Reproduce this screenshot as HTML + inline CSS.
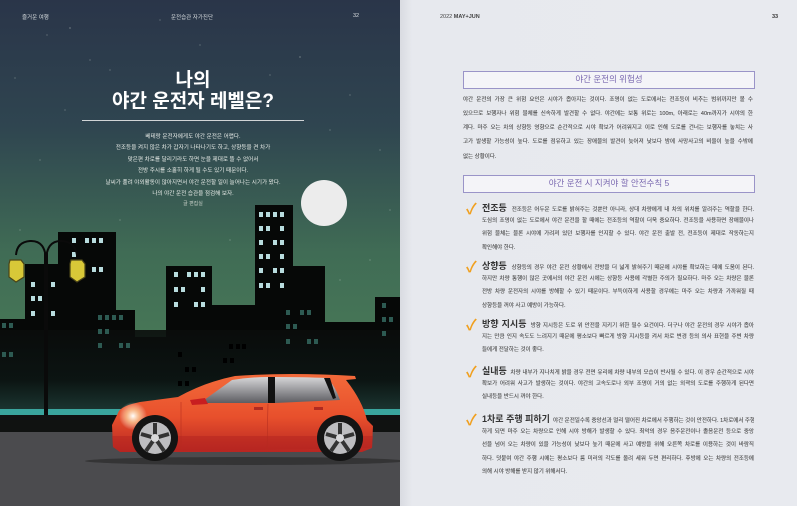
<!DOCTYPE html>
<html><head><meta charset="utf-8">
<style>
*{margin:0;padding:0;box-sizing:border-box}
body{width:797px;height:506px;overflow:hidden;font-family:"Liberation Sans","Noto Sans CJK KR",sans-serif;background:#e6e8ee;position:relative}
#L{position:absolute;left:0;top:0;width:400px;height:506px;overflow:hidden}
#R{position:absolute;left:400px;top:0;width:397px;height:506px;background:linear-gradient(90deg,#d9dbe1 0,#e7e9ee 12px,#e8eaef 100%)}
.t{position:absolute;white-space:nowrap;font-family:"Liberation Sans","Noto Sans CJK KR",sans-serif}
.ln{position:absolute;white-space:nowrap;font-size:5.5px;color:#484848;text-align:justify;text-align-last:justify;height:8px;line-height:8px;overflow:hidden;-webkit-text-stroke:0.1px #484848}
.box{position:absolute;left:63px;width:292px;height:18px;border:1.5px solid #9a94c8;background:#f4f4f8;color:#7a68b0;font-size:8.5px;text-align:center;line-height:15px}
.chk{position:absolute;left:66px;color:#f0a020;font-size:15px;font-weight:bold}
.h{font-weight:bold;color:#333;font-size:9px;-webkit-text-stroke:0}
</style></head><body>
<div id="L">
<svg width="400" height="506" viewBox="0 0 400 506" xmlns="http://www.w3.org/2000/svg">
<defs>
<linearGradient id="sky" x1="0" y1="0" x2="0" y2="1">
<stop offset="0" stop-color="#2a3549"/><stop offset="0.25" stop-color="#2f4550"/><stop offset="0.5" stop-color="#406c55"/><stop offset="0.8" stop-color="#4c7f58"/></linearGradient>
<linearGradient id="dark" x1="0" y1="0" x2="0" y2="1">
<stop offset="0" stop-color="#0a0c0b"/><stop offset="0.6" stop-color="#0c1513"/><stop offset="1" stop-color="#1e3c37"/></linearGradient>
<linearGradient id="body" x1="0" y1="0" x2="0" y2="1">
<stop offset="0" stop-color="#f26a3a"/><stop offset="0.55" stop-color="#e8502c"/><stop offset="1" stop-color="#b82622"/></linearGradient>
<linearGradient id="win" x1="0" y1="0" x2="0" y2="1">
<stop offset="0" stop-color="#d6d6d8"/><stop offset="1" stop-color="#5d5d62"/></linearGradient>
<radialGradient id="glow"><stop offset="0" stop-color="#fff"/><stop offset="0.5" stop-color="#ffe9b0" stop-opacity=".6"/><stop offset="1" stop-color="#fff" stop-opacity="0"/></radialGradient>
</defs>
<rect width="400" height="506" fill="url(#sky)"/>
<g fill="#cfd8d0" opacity=".7">
<circle cx="70" cy="28" r=".6"/><circle cx="47" cy="35" r=".5"/><circle cx="300" cy="57" r=".6"/><circle cx="15" cy="78" r=".5"/><circle cx="110" cy="70" r=".5"/><circle cx="350" cy="95" r=".5"/><circle cx="380" cy="150" r=".5"/><circle cx="40" cy="160" r=".5"/><circle cx="270" cy="75" r=".5"/><circle cx="200" cy="45" r=".5"/><circle cx="160" cy="20" r=".5"/><circle cx="230" cy="240" r=".5"/><circle cx="370" cy="260" r=".5"/><circle cx="340" cy="280" r=".5"/><circle cx="120" cy="220" r=".5"/><circle cx="20" cy="230" r=".5"/><circle cx="390" cy="210" r=".5"/><circle cx="90" cy="60" r=".5"/><circle cx="65" cy="110" r=".5"/><circle cx="330" cy="130" r=".5"/>
</g>
<circle cx="324" cy="203" r="23" fill="#ececec"/>
<g fill="#060807">
<rect x="0" y="319" width="25" height="100"/>
<rect x="25" y="264" width="33" height="155"/>
<rect x="58" y="232" width="58" height="187"/>
<rect x="116" y="310" width="19" height="109"/>
<rect x="135" y="337" width="31" height="82"/>
<rect x="166" y="266" width="46" height="153"/>
<rect x="212" y="305" width="43" height="114"/>
<rect x="255" y="205" width="38" height="214"/>
<rect x="293" y="266" width="32" height="153"/>
<rect x="325" y="322" width="50" height="97"/>
<rect x="375" y="297" width="25" height="122"/>
</g>
<rect x="0" y="330" width="400" height="82" fill="url(#dark)" opacity=".9"/>
<g fill="#b8dcde">
<rect x="72" y="238" width="4" height="5"/><rect x="85" y="238" width="4" height="5"/><rect x="92" y="238" width="4" height="5"/><rect x="99" y="238" width="4" height="5"/>
<rect x="72" y="252" width="4" height="5"/><rect x="72" y="267" width="4" height="5"/><rect x="92" y="267" width="4" height="5"/><rect x="99" y="267" width="4" height="5"/>
<rect x="31" y="282" width="4" height="5"/><rect x="51" y="282" width="4" height="5"/><rect x="31" y="296" width="4" height="5"/><rect x="38" y="296" width="4" height="5"/><rect x="31" y="311" width="4" height="5"/><rect x="51" y="311" width="4" height="5"/>
<rect x="174" y="272" width="4" height="5"/><rect x="187" y="272" width="4" height="5"/><rect x="194" y="272" width="4" height="5"/><rect x="201" y="272" width="4" height="5"/>
<rect x="174" y="287" width="4" height="5"/><rect x="181" y="287" width="4" height="5"/><rect x="201" y="287" width="4" height="5"/><rect x="174" y="302" width="4" height="5"/><rect x="194" y="302" width="4" height="5"/><rect x="201" y="302" width="4" height="5"/>
<rect x="259" y="212" width="4" height="5"/><rect x="266" y="212" width="4" height="5"/><rect x="273" y="212" width="4" height="5"/><rect x="280" y="212" width="4" height="5"/>
<rect x="259" y="226" width="4" height="5"/><rect x="266" y="226" width="4" height="5"/><rect x="280" y="226" width="4" height="5"/>
<rect x="259" y="240" width="4" height="5"/><rect x="273" y="240" width="4" height="5"/><rect x="280" y="240" width="4" height="5"/>
<rect x="259" y="254" width="4" height="5"/><rect x="266" y="254" width="4" height="5"/><rect x="280" y="254" width="4" height="5"/>
<rect x="259" y="268" width="4" height="5"/><rect x="273" y="268" width="4" height="5"/><rect x="280" y="268" width="4" height="5"/>
<rect x="259" y="283" width="4" height="5"/><rect x="266" y="283" width="4" height="5"/><rect x="280" y="283" width="4" height="5"/>
</g>
<g fill="#2d5a52">
<rect x="2" y="323" width="4" height="5"/><rect x="9" y="323" width="4" height="5"/><rect x="2" y="352" width="4" height="5"/><rect x="9" y="352" width="4" height="5"/>
<rect x="98" y="315" width="4" height="5"/><rect x="105" y="315" width="4" height="5"/><rect x="112" y="315" width="4" height="5"/><rect x="119" y="315" width="4" height="5"/><rect x="98" y="329" width="4" height="5"/><rect x="105" y="329" width="4" height="5"/><rect x="98" y="343" width="4" height="5"/><rect x="119" y="343" width="4" height="5"/><rect x="126" y="343" width="4" height="5"/>
<rect x="286" y="310" width="4" height="5"/><rect x="300" y="310" width="4" height="5"/><rect x="307" y="310" width="4" height="5"/><rect x="286" y="324" width="4" height="5"/><rect x="293" y="324" width="4" height="5"/><rect x="286" y="339" width="4" height="5"/><rect x="307" y="339" width="4" height="5"/><rect x="314" y="339" width="4" height="5"/>
<rect x="382" y="303" width="4" height="5"/><rect x="382" y="317" width="4" height="5"/><rect x="389" y="317" width="4" height="5"/><rect x="382" y="331" width="4" height="5"/>
</g>
<g fill="#000"><rect x="178" y="352" width="4" height="5"/><rect x="185" y="367" width="4" height="5"/><rect x="192" y="367" width="4" height="5"/><rect x="178" y="381" width="4" height="5"/><rect x="185" y="381" width="4" height="5"/><rect x="229" y="344" width="4" height="5"/><rect x="236" y="344" width="4" height="5"/><rect x="242" y="344" width="4" height="5"/><rect x="223" y="358" width="4" height="5"/><rect x="230" y="358" width="4" height="5"/></g>
<rect x="0" y="409" width="400" height="6" fill="#3aa59d"/>
<rect x="0" y="415" width="400" height="17" fill="#101211"/>
<rect x="0" y="432" width="400" height="74" fill="#4b4b4e"/>
<ellipse cx="245" cy="461" rx="160" ry="4" fill="#2e2e30" opacity=".8"/>
<rect x="44" y="253" width="4" height="162" fill="#0a0a0a"/>
<path d="M46 262 Q46 240 30 241 Q17 242 16 255 M46 262 Q46 240 62 241 Q75 242 77 255" stroke="#0a0a0a" stroke-width="2" fill="none"/>
<path d="M10 260 L21 260 L24 264 L24 277 L16 282 L9 277 L9 264 Z" fill="#d8c838" stroke="#4a4418" stroke-width="1.2"/>
<path d="M71 260 L82 260 L85 264 L85 277 L77 282 L70 277 L70 264 Z" fill="#d8c838" stroke="#4a4418" stroke-width="1.2"/>
<path d="M118 413 Q120 406 140 402 L178 397 Q205 382 235 376 Q290 372 355 376 L356 379 L346 380 Q362 400 367 420 L373 426 L372 448 L362 452 L120 452 L113 447 L112 425 Z" fill="url(#body)"/>
<path d="M200 403 L232 380 Q250 377 268 377 L268 403 Z" fill="url(#win)"/>
<path d="M275 377 Q305 377 326 378 Q334 383 340 400 L275 403 Z" fill="url(#win)"/>
<rect x="268" y="377" width="7" height="26" fill="#111"/>
<path d="M324 378 L330 378 L336 398 L333 399 Z" fill="#111"/>
<path d="M190 400 L205 398 L208 404 L192 405 Z" fill="#c81e20"/>
<rect x="254" y="407" width="9" height="3" fill="#b02a20"/><rect x="314" y="407" width="9" height="3" fill="#b02a20"/>
<path d="M181 402 L181 450 M268 404 L267 450" stroke="#b83020" stroke-width=".6"/>
<path d="M112 436 L373 436 L372 448 L120 452 L113 447Z" fill="#b32420" opacity=".5"/>
<circle cx="133" cy="416" r="14" fill="url(#glow)"/>
<g>
<circle cx="155" cy="438" r="23" fill="#141414"/><circle cx="155" cy="438" r="16" fill="#bdbdc0"/>
<path d="M155 438 L155 423 M155 438 L169 434 M155 438 L164 451 M155 438 L146 451 M155 438 L141 434" stroke="#333" stroke-width="4"/>
<circle cx="155" cy="438" r="4" fill="#d8d8da"/>
<circle cx="340" cy="438" r="23" fill="#141414"/><circle cx="340" cy="438" r="16" fill="#bdbdc0"/>
<path d="M340 438 L340 423 M340 438 L354 434 M340 438 L349 451 M340 438 L331 451 M340 438 L326 434" stroke="#333" stroke-width="4"/>
<circle cx="340" cy="438" r="4" fill="#d8d8da"/>
</g>
</svg>
<div class="t" style="left:22px;top:13px;font-size:5.5px;color:#d8dde0">즐거운 여행</div>
<div class="t" style="left:171px;top:13px;font-size:5.5px;color:#d8dde0">운전습관 자가진단</div>
<div class="t" style="left:353px;top:13px;font-size:5.5px;color:#d8dde0">32</div>
<div class="t" style="left:0;width:386px;text-align:center;top:70px;font-size:19px;font-weight:bold;color:#fff;line-height:21px">나의<br>야간 운전자 레벨은?</div>
<div style="position:absolute;left:82px;top:120px;width:222px;height:1.3px;background:#d0d4d6"></div>
<div class="t" style="left:0;width:386px;text-align:center;top:132px;font-size:5.6px;color:#e8ece8;line-height:11.4px">베테랑 운전자에게도 야간 운전은 어렵다.<br>전조등을 켜지 않은 차가 갑자기 나타나기도 하고, 상향등을 켠 차가<br>맞은편 차로를 달리기라도 하면 눈을 제대로 뜰 수 없어서<br>전방 주시를 소홀히 하게 될 수도 있기 때문이다.<br>날씨가 풀려 야외활동이 많아지면서 야간 운전할 일이 늘어나는 시기가 왔다.<br>나의 야간 운전 습관을 점검해 보자.</div>
<div class="t" style="left:0;width:386px;text-align:center;top:200px;font-size:5px;color:#c8d0c8">글 편집실</div>
</div>
<div id="R">
<div class="t" style="left:40px;top:14px;font-size:5.5px;color:#444">2022 <b>MAY+JUN</b></div>
<div class="t" style="left:372px;top:14px;font-size:5.5px;color:#333;font-weight:bold">33</div>
<div class="box" style="top:71px">야간 운전의 위험성</div>
<div class="ln" style="left:63px;width:290px;top:96px">야간 운전의 가장 큰 위험 요인은 시야가 좁아지는 것이다. 조명이 없는 도로에서는 전조등이 비추는 범위까지만 볼 수</div>
<div class="ln" style="left:63px;width:290px;top:110px">있으므로 보행자나 위험 물체를 신속하게 발견할 수 없다. 야간에는 보통 위로는 100m, 아래로는 40m까지가 시야의 한</div>
<div class="ln" style="left:63px;width:290px;top:124px">계다. 마주 오는 차의 상향등 영향으로 순간적으로 시야 확보가 어려워지고 이로 인해 도로를 건너는 보행자를 놓치는 사</div>
<div class="ln" style="left:63px;width:290px;top:138px">고가 발생할 가능성이 높다. 도로를 점유하고 있는 장애물의 발견이 늦어져 낮보다 밤에 사망사고의 비율이 높을 수밖에</div>
<div class="ln" style="left:63px;top:153px;text-align-last:left">없는 상황이다.</div>
<div class="box" style="top:175px">야간 운전 시 지켜야 할 안전수칙 5</div>

<div class="chk" style="top:198px">✓</div>
<div class="ln" style="left:82px;width:272px;top:203px;height:11px;line-height:11px"><span class="h">전조등</span> &nbsp;전조등은 어두운 도로를 밝혀주는 것뿐만 아니라, 상대 차량에게 내 차의 위치를 알려주는 역할을 한다.</div>
<div class="ln" style="left:82px;width:272px;top:217px">도심의 조명이 없는 도로에서 야간 운전을 할 때에는 전조등의 역할이 더욱 중요하다. 전조등을 사용하면 장애물이나</div>
<div class="ln" style="left:82px;width:272px;top:230px">위험 물체는 물론 시야에 가려져 있던 보행자를 인지할 수 있다. 야간 운전 출발 전, 전조등이 제대로 작동하는지</div>
<div class="ln" style="left:82px;top:244px;text-align-last:left">확인해야 한다.</div>

<div class="chk" style="top:256px">✓</div>
<div class="ln" style="left:82px;width:272px;top:261px;height:11px;line-height:11px"><span class="h">상향등</span> &nbsp;상향등의 경우 야간 운전 상황에서 전방을 더 넓게 밝혀주기 때문에 시야를 확보하는 데에 도움이 된다.</div>
<div class="ln" style="left:82px;width:272px;top:275px">하지만 차량 통행이 많은 곳에서의 야간 운전 시에는 상향등 사용에 각별한 주의가 필요하다. 마주 오는 차량은 물론</div>
<div class="ln" style="left:82px;width:272px;top:288px">전방 차량 운전자의 시야를 방해할 수 있기 때문이다. 부득이하게 사용할 경우에는 마주 오는 차량과 가까워질 때</div>
<div class="ln" style="left:82px;top:302px;text-align-last:left">상향등을 꺼야 사고 예방이 가능하다.</div>

<div class="chk" style="top:314px">✓</div>
<div class="ln" style="left:82px;width:272px;top:319px;height:11px;line-height:11px"><span class="h">방향 지시등</span> &nbsp;방향 지시등은 도로 위 안전을 지키기 위한 필수 요건이다. 더구나 야간 운전의 경우 시야가 좁아</div>
<div class="ln" style="left:82px;width:272px;top:333px">지는 만큼 인지 속도도 느려지기 때문에 평소보다 빠르게 방향 지시등을 켜서 차로 변경 등의 의사 표현을 주변 차량</div>
<div class="ln" style="left:82px;top:346px;text-align-last:left">들에게 전달하는 것이 좋다.</div>

<div class="chk" style="top:361px">✓</div>
<div class="ln" style="left:82px;width:272px;top:366px;height:11px;line-height:11px"><span class="h">실내등</span> &nbsp;차량 내부가 지나치게 밝을 경우 전면 유리에 차량 내부의 모습이 반사될 수 있다. 이 경우 순간적으로 시야</div>
<div class="ln" style="left:82px;width:272px;top:380px">확보가 어려워 사고가 발생하는 것이다. 야간의 고속도로나 외부 조명이 거의 없는 외곽의 도로를 주행하게 된다면</div>
<div class="ln" style="left:82px;top:393px;text-align-last:left">실내등을 반드시 꺼야 한다.</div>

<div class="chk" style="top:409px">✓</div>
<div class="ln" style="left:82px;width:272px;top:414px;height:11px;line-height:11px"><span class="h">1차로 주행 피하기</span> &nbsp;야간 운전일수록 중앙선과 멀리 떨어진 차로에서 주행하는 것이 안전하다. 1차로에서 주행</div>
<div class="ln" style="left:82px;width:272px;top:428px">하게 되면 마주 오는 차량으로 인해 시야 방해가 발생할 수 있다. 최악의 경우 음주운전이나 졸음운전 등으로 중앙</div>
<div class="ln" style="left:82px;width:272px;top:441px">선을 넘어 오는 차량이 있을 가능성이 낮보다 높기 때문에 사고 예방을 위해 오른쪽 차로를 이용하는 것이 바람직</div>
<div class="ln" style="left:82px;width:272px;top:455px">하다. 덧붙여 야간 주행 시에는 평소보다 룸 미러의 각도를 올려 세워 두면 편리하다. 후방에 오는 차량의 전조등에</div>
<div class="ln" style="left:82px;top:468px;text-align-last:left">의해 시야 방해를 받지 않기 위해서다.</div>
</div>
</body></html>
